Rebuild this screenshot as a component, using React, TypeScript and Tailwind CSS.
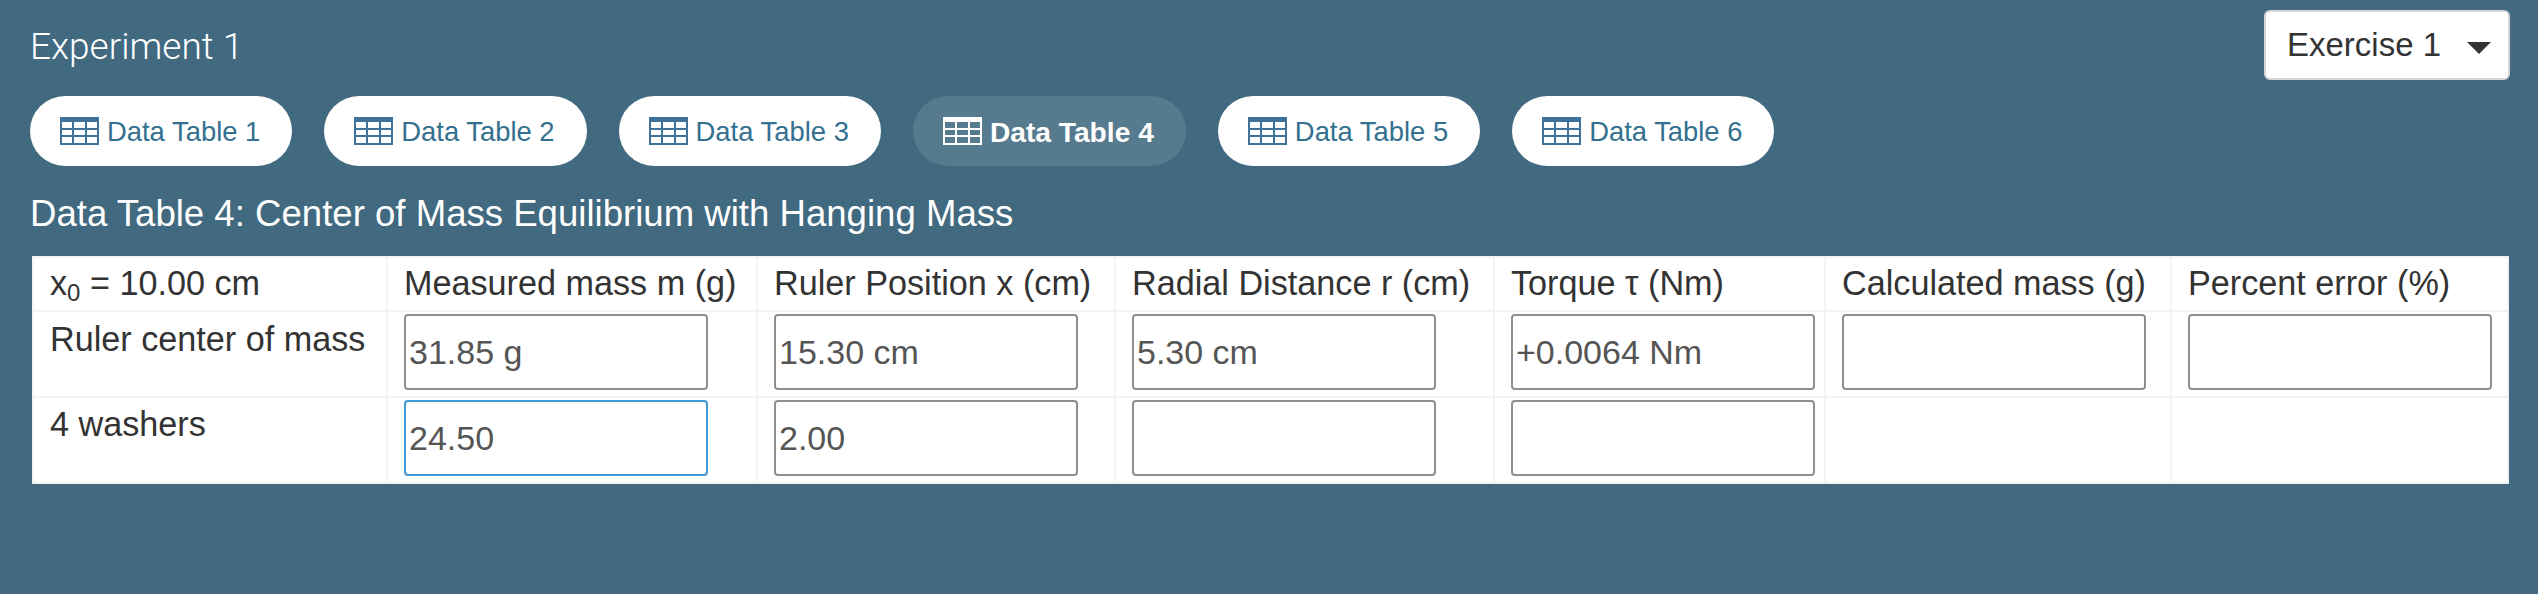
const tabs = ["Data Table 1", "Data Table 2", "Data Table 3", "Data Table 4", "Data Table 5", "Data Table 6"];

function TableIcon({ active }: { active: boolean }) {
  return (
    <svg width="39" height="28" viewBox="0 0 39 28" className={active ? "shrink-0 text-white" : "shrink-0 text-[#3f7399]"}>
      <path
        fill="currentColor"
        fillRule="evenodd"
        d="M0 0H39V28H0ZM2 5V11H12V5ZM14 5V11H25V5ZM27 5V11H37V5ZM2 13V18H12V13ZM14 13V18H25V13ZM27 13V18H37V13ZM2 20V26H12V20ZM14 20V26H25V20ZM27 20V26H37V20Z"
      />
    </svg>
  );
}

function Field({ value, focused }: { value?: string; focused?: boolean }) {
  return (
    <input
      readOnly
      value={value ?? ""}
      className={
        "block h-[76px] w-[304px] rounded-[4px] border-2 bg-white pl-[3px] text-[34px] text-[#555] outline-none " +
        (focused ? "border-[#3f9ad6]" : "border-[#8f8f8f]")
      }
    />
  );
}

const cell = "border-2 border-[#f2f2f2] px-[16px] align-top";

export default function App() {
  return (
    <div className="h-[594px] w-[2538px] overflow-hidden bg-[#41697f] font-['Liberation_Sans',Arial,sans-serif] text-[#333]">
      <div className="flex items-start justify-between pl-[30px] pr-[28px] pt-[10px]">
        <h1 className="mt-[15px] font-['Roboto',sans-serif] text-[37px] font-light leading-[44px] text-white">Experiment 1</h1>
        <button className="flex h-[70px] w-[246px] items-center justify-between rounded-[6px] border-2 border-[#d4d4d4] bg-white pl-[21px] pr-[17px] text-[33px]">
          Exercise 1
          <span className="mt-[5px] h-0 w-0 border-x-[12px] border-t-[12px] border-x-transparent border-t-[#333]" />
        </button>
      </div>

      <nav className="ml-[30px] mt-[16px] flex gap-[32px]">
        {tabs.map((t, i) => {
          const active = i === 3;
          return (
            <div
              key={t}
              className={
                "flex h-[70px] items-center gap-[8px] rounded-[35px] pl-[30px] pr-[32px] " +
                (active ? "bg-[#577b8e] text-[28.2px] font-bold text-white" : "bg-white text-[27.4px] text-[#34708f]")
              }
            >
              <TableIcon active={active} />
              <span className="mt-[2px]">{t}</span>
            </div>
          );
        })}
      </nav>

      <h2 className="ml-[30px] mt-[27px] text-[36.6px] leading-[42px] text-white">
        Data Table 4: Center of Mass Equilibrium with Hanging Mass
      </h2>

      <table className="ml-[32px] mt-[21px] w-[2475px] table-fixed border-collapse bg-white text-[34.2px]">
        <colgroup>
          <col className="w-[354px]" />
          <col className="w-[370px]" />
          <col className="w-[358px]" />
          <col className="w-[379px]" />
          <col className="w-[331px]" />
          <col className="w-[346px]" />
          <col className="w-[337px]" />
        </colgroup>
        <tbody>
          <tr className="h-[54px] whitespace-nowrap leading-[50px]">
            <td className={cell}>x<sub className="text-[24px] leading-none">0</sub> = 10.00 cm</td>
            <td className={cell}>Measured mass m (g)</td>
            <td className={cell}>Ruler Position x (cm)</td>
            <td className={cell}>Radial Distance r (cm)</td>
            <td className={cell}>Torque τ (Nm)</td>
            <td className={cell}>Calculated mass (g)</td>
            <td className={cell}>Percent error (%)</td>
          </tr>
          <tr className="h-[86px] whitespace-nowrap leading-[50px]">
            <td className={cell + " pt-[2px]"}>Ruler center of mass</td>
            <td className={cell + " py-[2px]"}><Field value="31.85 g" /></td>
            <td className={cell + " py-[2px]"}><Field value="15.30 cm" /></td>
            <td className={cell + " py-[2px]"}><Field value="5.30 cm" /></td>
            <td className={cell + " py-[2px]"}><Field value="+0.0064 Nm" /></td>
            <td className={cell + " py-[2px]"}><Field /></td>
            <td className={cell + " py-[2px]"}><Field /></td>
          </tr>
          <tr className="h-[86px] whitespace-nowrap leading-[50px]">
            <td className={cell + " pt-[1px]"}>4 washers</td>
            <td className={cell + " py-[2px]"}><Field value="24.50" focused /></td>
            <td className={cell + " py-[2px]"}><Field value="2.00" /></td>
            <td className={cell + " py-[2px]"}><Field /></td>
            <td className={cell + " py-[2px]"}><Field /></td>
            <td className={cell} />
            <td className={cell} />
          </tr>
        </tbody>
      </table>
    </div>
  );
}
